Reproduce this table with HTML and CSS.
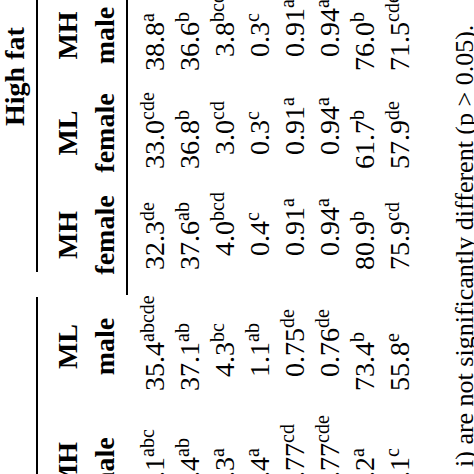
FILE: index.html
```html
<!DOCTYPE html>
<html>
<head>
<meta charset="utf-8">
<link rel="stylesheet" href="styles.css">
</head>
<body>
<div class="stage">
  <div class="page">
    <div class="sheet">
      <div class="grp">High fat</div>
      <div class="rule1"><div class="seg seg-a"></div><div class="seg seg-b"></div></div>
      <div class="cols head">
        <div>MH<br>male</div>
        <div>ML<br>male</div>
        <div>MH<br>female</div>
        <div>ML<br>female</div>
        <div>MH<br>male</div>
      </div>
      <div class="rule2"></div>
      <div class="cols data">
        <div class="cell c0"><span class="int">36</span><span>.1<sup>abc</sup></span></div>
        <div class="cell c1"><span class="int">35</span><span>.4<sup>abcde</sup></span></div>
        <div class="cell c2"><span class="int">32</span><span>.3<sup>de</sup></span></div>
        <div class="cell c3"><span class="int">33</span><span>.0<sup>cde</sup></span></div>
        <div class="cell c4"><span class="int">38</span><span>.8<sup>a</sup></span></div>

        <div class="cell c0"><span class="int">37</span><span>.4<sup>ab</sup></span></div>
        <div class="cell c1"><span class="int">37</span><span>.1<sup>ab</sup></span></div>
        <div class="cell c2"><span class="int">37</span><span>.6<sup>ab</sup></span></div>
        <div class="cell c3"><span class="int">36</span><span>.8<sup>b</sup></span></div>
        <div class="cell c4"><span class="int">36</span><span>.6<sup>b</sup></span></div>

        <div class="cell c0"><span class="int">4</span><span>.3<sup>a</sup></span></div>
        <div class="cell c1"><span class="int">4</span><span>.3<sup>bc</sup></span></div>
        <div class="cell c2"><span class="int">4</span><span>.0<sup>bcd</sup></span></div>
        <div class="cell c3"><span class="int">3</span><span>.0<sup>cd</sup></span></div>
        <div class="cell c4"><span class="int">3</span><span>.8<sup>bcd</sup></span></div>

        <div class="cell c0"><span class="int">0</span><span>.4<sup>a</sup></span></div>
        <div class="cell c1"><span class="int">1</span><span>.1<sup>ab</sup></span></div>
        <div class="cell c2"><span class="int">0</span><span>.4<sup>c</sup></span></div>
        <div class="cell c3"><span class="int">0</span><span>.3<sup>c</sup></span></div>
        <div class="cell c4"><span class="int">0</span><span>.3<sup>c</sup></span></div>

        <div class="cell c0"><span class="int">0</span><span>.77<sup>cd</sup></span></div>
        <div class="cell c1"><span class="int">0</span><span>.75<sup>de</sup></span></div>
        <div class="cell c2"><span class="int">0</span><span>.91<sup>a</sup></span></div>
        <div class="cell c3"><span class="int">0</span><span>.91<sup>a</sup></span></div>
        <div class="cell c4"><span class="int">0</span><span>.91<sup>a</sup></span></div>

        <div class="cell c0"><span class="int">0</span><span>.77<sup>cde</sup></span></div>
        <div class="cell c1"><span class="int">0</span><span>.76<sup>de</sup></span></div>
        <div class="cell c2"><span class="int">0</span><span>.94<sup>a</sup></span></div>
        <div class="cell c3"><span class="int">0</span><span>.94<sup>a</sup></span></div>
        <div class="cell c4"><span class="int">0</span><span>.94<sup>a</sup></span></div>

        <div class="cell c0"><span class="int">76</span><span>.2<sup>a</sup></span></div>
        <div class="cell c1"><span class="int">73</span><span>.4<sup>b</sup></span></div>
        <div class="cell c2"><span class="int">80</span><span>.9<sup>b</sup></span></div>
        <div class="cell c3"><span class="int">61</span><span>.7<sup>b</sup></span></div>
        <div class="cell c4"><span class="int">76</span><span>.0<sup>b</sup></span></div>

        <div class="cell c0"><span class="int">72</span><span>.1<sup>c</sup></span></div>
        <div class="cell c1"><span class="int">55</span><span>.8<sup>e</sup></span></div>
        <div class="cell c2"><span class="int">75</span><span>.9<sup>cd</sup></span></div>
        <div class="cell c3"><span class="int">57</span><span>.9<sup>de</sup></span></div>
        <div class="cell c4"><span class="int">71</span><span>.5<sup>cde</sup></span></div>
      </div>
      <div class="foot">i) are not significantly different (p &gt; 0.05).</div>
    </div>
  </div>
</div>
</body>
</html>
```
FILE: styles.css
```css
html, body {
  margin: 0;
  padding: 0;
  background: #fff;
}
body {
  width: 474px;
  height: 474px;
  overflow: hidden;
  font-family: "Liberation Serif", "Times New Roman", serif;
  color: #000;
}
.stage {
  width: 474px;
  height: 474px;
  overflow: hidden;
}
.page {
  width: 474px;
  height: 474px;
  transform: rotate(-90deg);
}
.sheet {
  margin-left: -60px;
  width: 540px;
}
.grp {
  margin-top: -7px;
  height: 30px;
  line-height: 30px;
  font-size: 28px;
  font-weight: bold;
  padding-left: 401px;
  white-space: nowrap;
}
.rule1 {
  display: flex;
  margin-top: 6.25px;
  height: 1.5px;
}
.seg {
  background: #000;
  height: 1.5px;
}
.seg-a { width: 230px; }
.seg-b { margin-left: 25px; flex: 1; }
.cols {
  display: grid;
  grid-template-columns: 122px 117px 106px 98px 97px;
}
.head {
  margin-top: 11.35px;
  font-weight: bold;
  font-size: 28px;
  line-height: 37px;
  text-align: center;
  white-space: nowrap;
}
.rule2 {
  margin-top: 3.15px;
  margin-left: 232px;
  height: 1.5px;
  background: #000;
}
.data {
  margin-top: 9.35px;
  font-size: 28px;
  line-height: 35px;
}
.cell {
  display: flex;
  white-space: nowrap;
  height: 35px;
}
.int {
  width: 28px;
  flex: none;
  text-align: right;
}
.c0 { padding-left: 21px; }
.c1 { padding-left: 14px; }
.c2 { padding-left: 18px; }
.c3 { padding-left: 13px; }
.c4 { padding-left: 13px; }
sup {
  font-size: 20px;
  line-height: 0;
  vertical-align: 10px;
}
.foot {
  margin-top: 33.1px;
  font-size: 26px;
  line-height: 30px;
  padding-left: 60px;
  white-space: nowrap;
}
```
